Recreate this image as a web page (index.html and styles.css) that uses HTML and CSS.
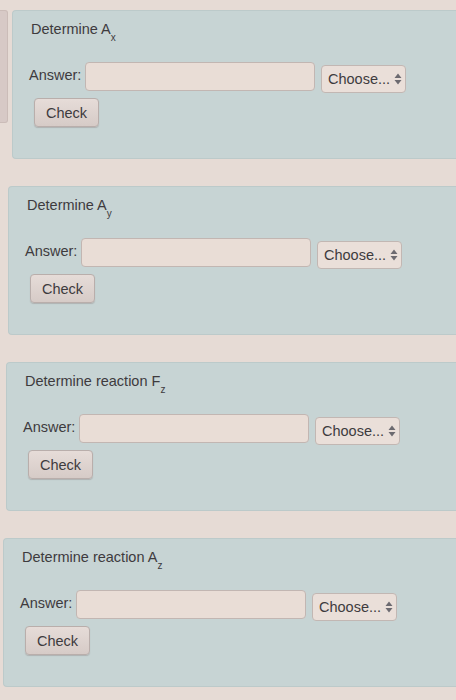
FILE: index.html
```html
<!DOCTYPE html>
<html>
<head>
<meta charset="utf-8">
<link rel="stylesheet" href="styles.css">
</head>
<body>
<div class="page">
  <div class="lead">
    <div class="strip"></div>
    <div class="card c1">
      <div class="q">Determine A<sub>x</sub></div>
      <div class="row">
        <span class="lbl">Answer:</span>
        <span class="input"></span>
        <span class="select">Choose...<svg class="arr" width="8" height="12" viewBox="0 0 8 12"><path d="M4 0.5 L7.5 5 L0.5 5 Z M4 11.5 L7.5 7 L0.5 7 Z" fill="#6c6a70"/></svg></span>
      </div>
      <button class="check">Check</button>
    </div>
  </div>
  <div class="card c2">
    <div class="q">Determine A<sub>y</sub></div>
    <div class="row">
      <span class="lbl">Answer:</span>
      <span class="input"></span>
      <span class="select">Choose...<svg class="arr" width="8" height="12" viewBox="0 0 8 12"><path d="M4 0.5 L7.5 5 L0.5 5 Z M4 11.5 L7.5 7 L0.5 7 Z" fill="#6c6a70"/></svg></span>
    </div>
    <button class="check">Check</button>
  </div>
  <div class="card c3">
    <div class="q">Determine reaction F<sub>z</sub></div>
    <div class="row">
      <span class="lbl">Answer:</span>
      <span class="input"></span>
      <span class="select">Choose...<svg class="arr" width="8" height="12" viewBox="0 0 8 12"><path d="M4 0.5 L7.5 5 L0.5 5 Z M4 11.5 L7.5 7 L0.5 7 Z" fill="#6c6a70"/></svg></span>
    </div>
    <button class="check">Check</button>
  </div>
  <div class="card c4">
    <div class="q">Determine reaction A<sub>z</sub></div>
    <div class="row">
      <span class="lbl">Answer:</span>
      <span class="input"></span>
      <span class="select">Choose...<svg class="arr" width="8" height="12" viewBox="0 0 8 12"><path d="M4 0.5 L7.5 5 L0.5 5 Z M4 11.5 L7.5 7 L0.5 7 Z" fill="#6c6a70"/></svg></span>
    </div>
    <button class="check">Check</button>
  </div>
</div>
</body>
</html>
```
FILE: styles.css
```css
html, body {
  margin: 0;
  padding: 0;
  background: #e6dbd5;
  overflow: hidden;
}
body {
  font-family: "Liberation Sans", Arial, sans-serif;
  color: #3e3b3e;
  font-size: 14.5px;
}
.page {
  width: 456px;
  height: 700px;
  overflow: hidden;
  padding-top: 10px;
  box-sizing: border-box;
  display: flex;
  flex-direction: column;
  gap: 27px;
}
.lead {
  display: flex;
  align-items: flex-start;
  gap: 4px;
}
.strip {
  flex: none;
  width: 8px;
  height: 113px;
  background: #d7c9c6;
  border: 1px solid #cbbcb8;
  border-left: none;
  border-radius: 0 3px 3px 0;
  box-sizing: border-box;
}
.card {
  flex: none;
  width: 470px;
  height: 149px;
  box-sizing: border-box;
  background: #c7d4d4;
  border: 1px solid #bccaca;
  border-right: none;
  border-radius: 4px 0 0 4px;
  padding: 8px 0 0 16px;
}
.c2 { margin-left: 8px; }
.c3 { margin-left: 6px; }
.c4 { margin-left: 3px; }
.q {
  margin-left: 2px;
  line-height: 20px;
  height: 20px;
  font-size: 14.5px;
}
.q sub {
  font-size: 10px;
  vertical-align: -7px;
  line-height: 0;
}
.row {
  display: flex;
  align-items: flex-start;
  margin-top: 23px;
}
.lbl {
  width: 56px;
  flex: none;
  line-height: 26px;
}
.input {
  flex: none;
  width: 230px;
  height: 29px;
  box-sizing: border-box;
  background: #e9ddd6;
  border: 1px solid #c2b6b2;
  border-radius: 4px;
}
.select {
  flex: none;
  margin-left: 6px;
  margin-top: 3px;
  width: 85px;
  height: 28px;
  box-sizing: border-box;
  background: #eadfd9;
  border: 1px solid #c2b7b3;
  border-radius: 4px;
  display: flex;
  align-items: center;
  padding-left: 6px;
  gap: 4px;
  font-size: 14.5px;
  color: #3e3b3e;
}
.arr { flex: none; }
.check {
  display: block;
  margin: 5px 0 0 5px;
  width: 65px;
  height: 29px;
  font-family: "Liberation Sans", Arial, sans-serif;
  font-size: 14.5px;
  color: #3e3b3e;
  background: linear-gradient(#e6dcd8, #d6cbc7);
  border: 1px solid #b9aeab;
  border-radius: 4px;
  box-shadow: 0 1px 1px rgba(120, 100, 100, 0.3);
  padding: 0;
}
```
